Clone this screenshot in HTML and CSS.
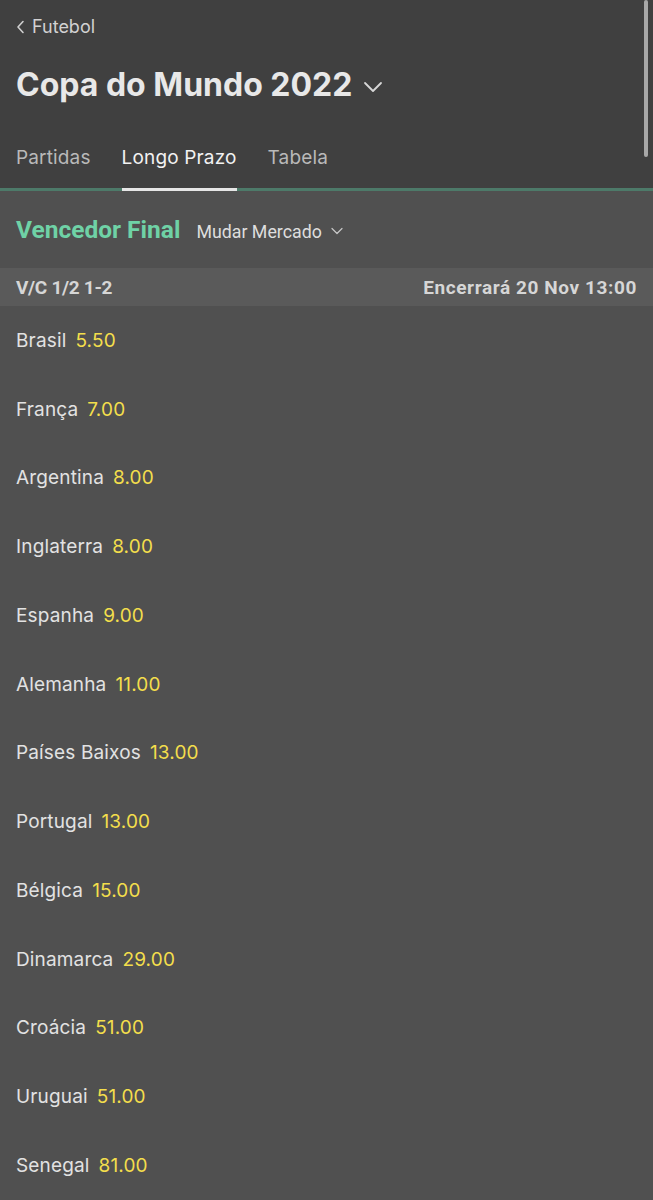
FILE: index.html
```html
<!DOCTYPE html>
<html lang="pt">
<head>
<meta charset="utf-8">
<link rel="stylesheet" href="styles.css">
</head>
<body>
<div class="page">
  <header class="header">
    <div class="back">
      <svg class="back-icon" width="10" height="14" viewBox="0 0 10 14"><path d="M7 1.5 L2 7 L7 12.5" fill="none" stroke="#cfcfcf" stroke-width="1.6" stroke-linecap="round" stroke-linejoin="round"/></svg>
      <span>Futebol</span>
    </div>
    <div class="title-row">
      <h1 class="title">Copa do Mundo 2022</h1>
      <svg class="title-caret" width="20" height="12" viewBox="0 0 20 12"><path d="M2 2 L10 10 L18 2" fill="none" stroke="#d8d8d8" stroke-width="1.8" stroke-linecap="round" stroke-linejoin="round"/></svg>
    </div>
    <nav class="tabs">
      <div class="tab">Partidas</div>
      <div class="tab active">Longo Prazo</div>
      <div class="tab">Tabela</div>
    </nav>
    <div class="scrollbar"></div>
  </header>
  <div class="market">
    <span class="market-name">Vencedor Final</span>
    <span class="market-change">Mudar Mercado
      <svg width="12" height="8" viewBox="0 0 12 8"><path d="M1 1.5 L6 6.5 L11 1.5" fill="none" stroke="#c8c8c8" stroke-width="1.2" stroke-linecap="round" stroke-linejoin="round"/></svg>
    </span>
  </div>
  <div class="bar">
    <span class="bar-left">V/C 1/2 1-2</span>
    <span class="bar-right">Encerrará 20 Nov 13:00</span>
  </div>
  <ul class="list">
    <li class="row"><span class="team">Brasil</span><span class="odd">5.50</span></li>
    <li class="row"><span class="team">França</span><span class="odd">7.00</span></li>
    <li class="row"><span class="team">Argentina</span><span class="odd">8.00</span></li>
    <li class="row"><span class="team">Inglaterra</span><span class="odd">8.00</span></li>
    <li class="row"><span class="team">Espanha</span><span class="odd">9.00</span></li>
    <li class="row"><span class="team">Alemanha</span><span class="odd">11.00</span></li>
    <li class="row"><span class="team">Países Baixos</span><span class="odd">13.00</span></li>
    <li class="row"><span class="team">Portugal</span><span class="odd">13.00</span></li>
    <li class="row"><span class="team">Bélgica</span><span class="odd">15.00</span></li>
    <li class="row"><span class="team">Dinamarca</span><span class="odd">29.00</span></li>
    <li class="row"><span class="team">Croácia</span><span class="odd">51.00</span></li>
    <li class="row"><span class="team">Uruguai</span><span class="odd">51.00</span></li>
    <li class="row"><span class="team">Senegal</span><span class="odd">81.00</span></li>
  </ul>
</div>
</body>
</html>
```
FILE: styles.css
```css
* { box-sizing: border-box; }
html, body { margin: 0; padding: 0; }
body {
  background: #505050;
  font-family: Inter, "Noto Sans", sans-serif;
  color: #e4e4e4;
  width: 653px;
  height: 1200px;
  overflow: hidden;
}
.page { width: 653px; }
.header {
  position: relative;
  background: #404040;
  padding: 0 16px;
  border-bottom: 3px solid #4d7a69;
}
.back {
  display: flex;
  align-items: center;
  gap: 6px;
  height: 52px;
  font-size: 18px;
  color: #d2d2d2;
}
.back-icon { margin-top: 1px; }
.title-row {
  display: flex;
  align-items: center;
  gap: 11px;
  height: 64px;
}
.title {
  margin: 0;
  font-size: 32px;
  font-weight: 700;
  color: #e8e8e8;
  letter-spacing: 0;
}
.title-caret { margin-top: 6px; }
.tabs {
  display: flex;
  gap: 31px;
  margin-top: 6px;
}
.tab {
  font-size: 19px;
  letter-spacing: 0.15px;
  color: #b9b9b9;
  height: 66px;
  padding-top: 24px;
  position: relative;
}
.tab.active { color: #f2f2f2; }
.tab.active::after {
  content: "";
  position: absolute;
  left: 0;
  right: 0;
  bottom: -3px;
  height: 3px;
  background: #e6e6e6;
}
.scrollbar {
  position: absolute;
  right: 5px;
  top: 0;
  width: 4px;
  height: 157px;
  border-radius: 2px;
  background: #a8a8a8;
}
.market {
  display: flex;
  align-items: center;
  gap: 16px;
  height: 77px;
  padding: 0 16px;
}
.market-name {
  font-family: Roboto, sans-serif;
  font-size: 24.5px;
  font-weight: 700;
  color: #6fd2a6;
  letter-spacing: 0;
}
.market-change {
  display: flex;
  align-items: center;
  gap: 9px;
  font-family: Roboto, sans-serif;
  font-size: 17.8px;
  color: #dedede;
  margin-top: 3px;
}
.bar {
  display: flex;
  justify-content: space-between;
  align-items: center;
  height: 38px;
  padding: 0 16px;
  background: #5a5a5a;
  font-family: Roboto, sans-serif;
  font-size: 19px;
  font-weight: 700;
  color: #d6d6d6;
}
.bar-left { letter-spacing: -0.3px; }
.bar-right { letter-spacing: 0.6px; }
.list { list-style: none; margin: 0; padding: 0; }
.row {
  display: flex;
  align-items: center;
  gap: 9px;
  height: 68.75px;
  padding: 0 16px;
  font-size: 19px;
  letter-spacing: 0.15px;
}
.team { color: #e2e2e2; }
.odd { color: #f3de4c; }
```
